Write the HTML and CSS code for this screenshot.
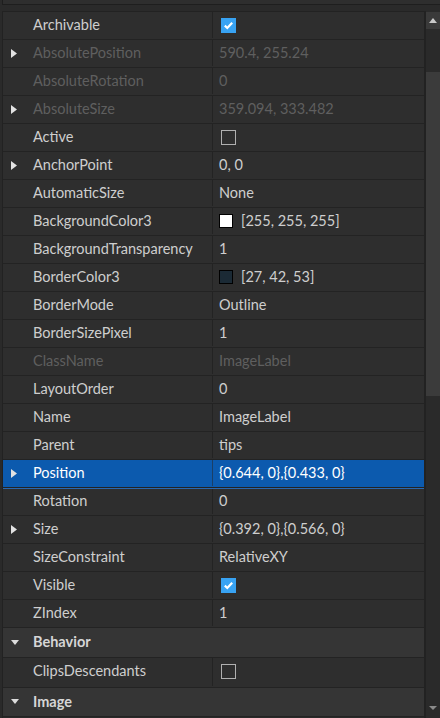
FILE: index.html
```html
<!DOCTYPE html>
<html>
<head>
<meta charset="utf-8">
<link rel="stylesheet" href="styles.css">
</head>
<body>
<div class="panel">
  <div class="filter"></div>
  <div class="main">
    <div class="list">
      <div class="row"><div class="name"><span class="exp"></span>Archivable</div><div class="val"><span class="chk on"><svg viewBox="0 0 15 15" width="15" height="15"><rect width="15" height="15" fill="#38a3f3"/><path d="M3.8 7.6 L6.3 10 L11.2 4.8" fill="none" stroke="#fff" stroke-width="2.2"/></svg></span></div></div>
      <div class="row dis"><div class="name"><span class="exp"><svg class="tri-r" viewBox="0 0 6 9" width="6" height="9"><polygon points="0,0 6,4.5 0,9"/></svg></span>AbsolutePosition</div><div class="val">590.4, 255.24</div></div>
      <div class="row dis"><div class="name"><span class="exp"></span>AbsoluteRotation</div><div class="val">0</div></div>
      <div class="row dis"><div class="name"><span class="exp"><svg class="tri-r" viewBox="0 0 6 9" width="6" height="9"><polygon points="0,0 6,4.5 0,9"/></svg></span>AbsoluteSize</div><div class="val">359.094, 333.482</div></div>
      <div class="row"><div class="name"><span class="exp"></span>Active</div><div class="val"><span class="chk off"></span></div></div>
      <div class="row"><div class="name"><span class="exp"><svg class="tri-r" viewBox="0 0 6 9" width="6" height="9"><polygon points="0,0 6,4.5 0,9"/></svg></span>AnchorPoint</div><div class="val">0, 0</div></div>
      <div class="row"><div class="name"><span class="exp"></span>AutomaticSize</div><div class="val">None</div></div>
      <div class="row"><div class="name"><span class="exp"></span>BackgroundColor3</div><div class="val"><span class="sw white"></span>[255, 255, 255]</div></div>
      <div class="row"><div class="name"><span class="exp"></span>BackgroundTransparency</div><div class="val">1</div></div>
      <div class="row"><div class="name"><span class="exp"></span>BorderColor3</div><div class="val"><span class="sw dark"></span>[27, 42, 53]</div></div>
      <div class="row"><div class="name"><span class="exp"></span>BorderMode</div><div class="val">Outline</div></div>
      <div class="row"><div class="name"><span class="exp"></span>BorderSizePixel</div><div class="val">1</div></div>
      <div class="row dis"><div class="name"><span class="exp"></span>ClassName</div><div class="val">ImageLabel</div></div>
      <div class="row"><div class="name"><span class="exp"></span>LayoutOrder</div><div class="val">0</div></div>
      <div class="row"><div class="name"><span class="exp"></span>Name</div><div class="val">ImageLabel</div></div>
      <div class="row"><div class="name"><span class="exp"></span>Parent</div><div class="val">tips</div></div>
      <div class="row sel"><div class="name"><span class="exp"><svg class="tri-r" viewBox="0 0 6 9" width="6" height="9"><polygon points="0,0 6,4.5 0,9"/></svg></span>Position</div><div class="val">{0.644, 0},{0.433, 0}</div></div>
      <div class="row"><div class="name"><span class="exp"></span>Rotation</div><div class="val">0</div></div>
      <div class="row"><div class="name"><span class="exp"><svg class="tri-r" viewBox="0 0 6 9" width="6" height="9"><polygon points="0,0 6,4.5 0,9"/></svg></span>Size</div><div class="val">{0.392, 0},{0.566, 0}</div></div>
      <div class="row"><div class="name"><span class="exp"></span>SizeConstraint</div><div class="val">RelativeXY</div></div>
      <div class="row"><div class="name"><span class="exp"></span>Visible</div><div class="val"><span class="chk on"><svg viewBox="0 0 15 15" width="15" height="15"><rect width="15" height="15" fill="#38a3f3"/><path d="M3.8 7.6 L6.3 10 L11.2 4.8" fill="none" stroke="#fff" stroke-width="2.2"/></svg></span></div></div>
      <div class="row"><div class="name"><span class="exp"></span>ZIndex</div><div class="val">1</div></div>
      <div class="cat"><span class="exp"><svg class="tri-d" viewBox="0 0 8 5" width="8" height="5"><polygon points="0,0 8,0 4,5"/></svg></span>Behavior</div>
      <div class="row tall"><div class="name"><span class="exp"></span>ClipsDescendants</div><div class="val"><span class="chk off"></span></div></div>
      <div class="cat"><span class="exp"><svg class="tri-d" viewBox="0 0 8 5" width="8" height="5"><polygon points="0,0 8,0 4,5"/></svg></span>Image</div>
    </div>
    <div class="scrollbar">
      <div class="sb-btn up"><svg viewBox="0 0 8 5" width="8" height="5"><polygon points="0,5 8,5 4,0"/></svg></div>
      <div class="sb-track"><div class="thumb"></div></div>
      <div class="sb-btn down"><svg viewBox="0 0 8 4" width="8" height="4"><polygon points="0,0 8,0 4,4"/></svg></div>
    </div>
  </div>
</div>
</body>
</html>
```
FILE: styles.css
```css
html, body {
  margin: 0;
  padding: 0;
  background: #2a2a2a;
  height: 718px;
  overflow: hidden;
}
body {
  font-family: Lato, "Noto Sans", sans-serif;
  font-size: 14.5px;
  color: #cecece;
}
.panel {
  width: 440px;
  height: 718px;
}
.filter {
  height: 5px;
  margin-left: 2px;
  background: #2e2e2e;
  border-left: 1px solid #1e1e1e;
  border-bottom: 1px solid #1e1e1e;
  box-sizing: border-box;
}
.main {
  display: flex;
  margin-top: 6px;
  height: 707px;
}
.list {
  width: 423px;
  margin-left: 2px;
  border-left: 1px solid #222;
  border-top: 1px solid #222;
  border-right: 1px solid #222;
  box-sizing: border-box;
}
.row {
  display: grid;
  grid-template-columns: 210px 1fr;
  height: 28px;
  box-sizing: border-box;
  border-bottom: 1px solid #232323;
  background: #2e2e2e;
  line-height: 1;
  padding-bottom: 1px;
}
.row.tall { height: 30px; }
.name {
  display: flex;
  align-items: center;
  border-right: 1px solid #232323;
  white-space: nowrap;
  overflow: hidden;
}
.exp {
  width: 30px;
  flex: none;
  display: flex;
  align-items: center;
  padding-left: 8px;
  box-sizing: border-box;
}
.tri-r polygon { fill: #e2e2e2; }
.tri-d polygon { fill: #dddddd; }
.val {
  display: flex;
  align-items: center;
  padding-left: 6px;
  white-space: nowrap;
  overflow: hidden;
}
.dis .name, .dis .val { color: #5f5f5f; }
.sel { background: #0c5aae; box-shadow: 0 1px 0 #2a68b0; position: relative; }
.sel .name, .sel .val { color: #ffffff; }
.sel .name { border-right-color: #1b3f66; }
.chk {
  width: 15px;
  height: 15px;
  margin-left: 2px;
  box-sizing: border-box;
  display: block;
}
.chk svg { display: block; }
.chk.off { border: 1px solid #b0b0b0; }
.sw {
  width: 14px;
  height: 14px;
  box-sizing: border-box;
  border: 1px solid #000;
  margin-right: 8px;
  display: block;
}
.sw.white { background: #ffffff; }
.sw.dark { background: #1b2a35; }
.cat {
  display: flex;
  align-items: center;
  height: 29.5px;
  box-sizing: border-box;
  border-bottom: 1px solid #232323;
  background: #353535;
  font-weight: bold;
  color: #d6d6d6;
  line-height: 1;
}
.scrollbar {
  width: 15px;
  display: flex;
  flex-direction: column;
  background: #2a2a2a;
  border-left: 1px solid #222;
  box-sizing: border-box;
}
.sb-btn {
  height: 17px;
  display: flex;
  align-items: center;
  justify-content: center;
  flex: none;
}
.sb-btn.up { background: #3a3a3a; margin-top: 1px; }
.sb-btn.up polygon { fill: #c8c8c8; }
.sb-btn.down { margin-top: auto; height: 20px; }
.sb-btn.down polygon { fill: #8a8a8a; }
.sb-track { flex: 1; }
.thumb {
  margin-top: 43px;
  height: 324px;
  background: #3b3b3b;
}
```
